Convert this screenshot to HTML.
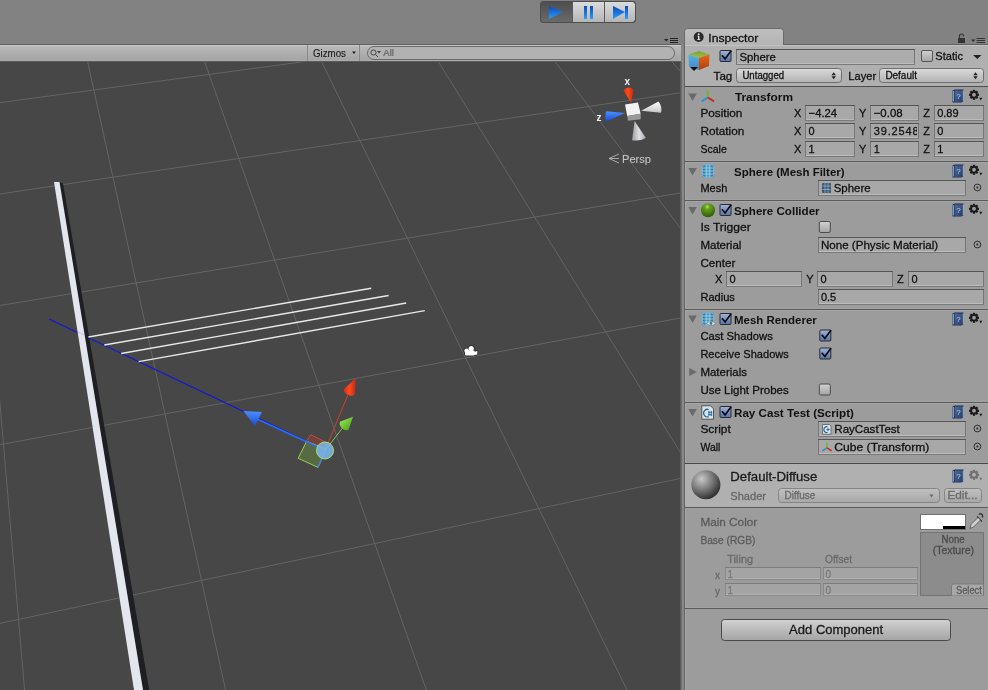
<!DOCTYPE html>
<html><head><meta charset="utf-8"><style>
html,body{margin:0;padding:0;width:988px;height:690px;overflow:hidden;background:#828282}
svg{display:block;font-family:"Liberation Sans",sans-serif;will-change:transform}
</style></head><body>
<svg width="988" height="690" viewBox="0 0 988 690">
<rect x="0" y="0" width="988" height="690" fill="#828282"/>
<defs>
<linearGradient id="tb" x1="0" y1="0" x2="0" y2="1"><stop offset="0" stop-color="#bcbcbc"/><stop offset="1" stop-color="#a2a2a2"/></linearGradient>
<linearGradient id="btn" x1="0" y1="0" x2="0" y2="1"><stop offset="0" stop-color="#dcdcdc"/><stop offset="1" stop-color="#b4b4b4"/></linearGradient>
<linearGradient id="btnd" x1="0" y1="0" x2="0" y2="1"><stop offset="0" stop-color="#4e4e4e"/><stop offset="1" stop-color="#6a6a6a"/></linearGradient>
<linearGradient id="tab" x1="0" y1="0" x2="0" y2="1"><stop offset="0" stop-color="#bfbfbf"/><stop offset="1" stop-color="#b4b4b4"/></linearGradient>
<linearGradient id="dd" x1="0" y1="0" x2="0" y2="1"><stop offset="0" stop-color="#dadada"/><stop offset="1" stop-color="#b2b2b2"/></linearGradient><linearGradient id="ac" x1="0" y1="0" x2="0" y2="1"><stop offset="0" stop-color="#d2d2d2"/><stop offset="1" stop-color="#a4a4a4"/></linearGradient>
<linearGradient id="blu" x1="0" y1="0" x2="0" y2="1"><stop offset="0" stop-color="#0a4ab8"/><stop offset="1" stop-color="#2a9cff"/></linearGradient>
<linearGradient id="cb" x1="0" y1="0" x2="0" y2="1"><stop offset="0" stop-color="#a2b4d6"/><stop offset="1" stop-color="#5474aa"/></linearGradient>
<linearGradient id="cbo" x1="0" y1="0" x2="0" y2="1"><stop offset="0" stop-color="#d2d2d2"/><stop offset="1" stop-color="#a4a4a4"/></linearGradient>
<radialGradient id="sph" cx="0.35" cy="0.3" r="0.75"><stop offset="0" stop-color="#c8c8c8"/><stop offset="0.6" stop-color="#6a6a6a"/><stop offset="1" stop-color="#2a2a2a"/></radialGradient>
<radialGradient id="gsph" cx="0.45" cy="0.25" r="0.75"><stop offset="0" stop-color="#b8e080"/><stop offset="0.22" stop-color="#68a41c"/><stop offset="1" stop-color="#2e5a04"/></radialGradient>
<linearGradient id="book" x1="0" y1="0" x2="1" y2="1"><stop offset="0" stop-color="#4e6c9c"/><stop offset="1" stop-color="#223e6c"/></linearGradient>
<linearGradient id="cr" x1="0" y1="0" x2="1" y2="0"><stop offset="0" stop-color="#d83010"/><stop offset="0.45" stop-color="#ff4a1e"/><stop offset="1" stop-color="#b82c10"/></linearGradient>
<linearGradient id="cbl" x1="0" y1="0" x2="0" y2="1"><stop offset="0" stop-color="#4a90ff"/><stop offset="1" stop-color="#1a4ad0"/></linearGradient>
<linearGradient id="cw" x1="0" y1="0" x2="0" y2="1"><stop offset="0" stop-color="#ffffff"/><stop offset="1" stop-color="#c4c4c4"/></linearGradient>
<linearGradient id="cg" x1="0" y1="0" x2="1" y2="0"><stop offset="0" stop-color="#9a9a9e"/><stop offset="0.5" stop-color="#e0e0e4"/><stop offset="1" stop-color="#a8a8ac"/></linearGradient>
<linearGradient id="cgr" x1="0" y1="0" x2="1" y2="1"><stop offset="0" stop-color="#a8f060"/><stop offset="1" stop-color="#3c9a10"/></linearGradient>
<linearGradient id="meshg" x1="0" y1="0" x2="1" y2="0"><stop offset="0" stop-color="#2a6a98"/><stop offset="0.5" stop-color="#4a9cc8"/><stop offset="1" stop-color="#2a6a98"/></linearGradient>
<linearGradient id="cubeB" x1="0" y1="0" x2="0" y2="1"><stop offset="0" stop-color="#5cb0e0"/><stop offset="1" stop-color="#3a8cc4"/></linearGradient>
<linearGradient id="cubeO" x1="0" y1="0" x2="0" y2="1"><stop offset="0" stop-color="#e2681e"/><stop offset="1" stop-color="#b83c0a"/></linearGradient>
<linearGradient id="cubeG" x1="0" y1="0" x2="0" y2="1"><stop offset="0" stop-color="#7aa432"/><stop offset="1" stop-color="#a0c048"/></linearGradient>
<linearGradient id="shd" x1="0" y1="0" x2="0" y2="1"><stop offset="0" stop-color="#c0c0c0"/><stop offset="1" stop-color="#a8a8a8"/></linearGradient>
<clipPath id="scene"><rect x="0" y="62" width="680" height="628"/></clipPath>
</defs>
<rect x="540.5" y="1.5" width="95" height="21" rx="3" fill="url(#btn)" stroke="#4c4c4c"/>
<path d="M543.5 2 h29 v20 h-29 a3 3 0 0 1 -3 -3 v-14 a3 3 0 0 1 3 -3z" fill="url(#btnd)"/>
<rect x="540.5" y="1.5" width="95" height="21" rx="3" fill="none" stroke="#4c4c4c"/>
<line x1="572.5" y1="2" x2="572.5" y2="22" stroke="#5a5a5a"/><line x1="604.5" y1="2" x2="604.5" y2="22" stroke="#5a5a5a"/>
<path d="M549 6 L563 12 L549 19 Z" fill="url(#blu)"/>
<rect x="584" y="6" width="3" height="13" fill="url(#blu)"/><rect x="590" y="6" width="3" height="13" fill="url(#blu)"/>
<path d="M613 6 L625 12 L613 19 Z" fill="url(#blu)"/><rect x="625" y="6" width="3" height="13" fill="url(#blu)"/>
<rect x="0" y="44" width="681" height="18" fill="url(#tb)"/>
<line x1="0" y1="44.5" x2="681" y2="44.5" stroke="#606060"/>
<line x1="0" y1="61.5" x2="681" y2="61.5" stroke="#5a5a5a"/><line x1="0" y1="45.5" x2="681" y2="45.5" stroke="#c8c8c8"/><line x1="0" y1="60.5" x2="681" y2="60.5" stroke="#acacac"/>
<line x1="307.5" y1="45" x2="307.5" y2="61" stroke="#8a8a8a"/><line x1="359.5" y1="45" x2="359.5" y2="61" stroke="#8a8a8a"/>
<text x="313" y="57" font-size="10" fill="#1a1a1a" stroke="#1a1a1a" stroke-width="0.12" textLength="33" lengthAdjust="spacingAndGlyphs">Gizmos</text>
<path d="M352 51.5 L356 51.5 L354 54 Z" fill="#222"/>
<rect x="367.5" y="46.5" width="307" height="13" rx="6.5" fill="#b2b2b2" stroke="#6a6a6a"/>
<circle cx="373.5" cy="52.5" r="2.6" fill="none" stroke="#444" stroke-width="1"/><line x1="375.4" y1="54.4" x2="378" y2="57" stroke="#444"/>
<path d="M377 51 L381 51 L379 53.5 Z" fill="#444"/>
<text x="383.3" y="55.6" font-size="8.5" fill="#5e5e5e" stroke="#5e5e5e" stroke-width="0.15" textLength="10.6" lengthAdjust="spacingAndGlyphs">All</text>
<path d="M664 39 L668.5 39 L666.2 41.5 Z" fill="#222"/>
<line x1="670" y1="38.5" x2="678" y2="38.5" stroke="#222"/>
<line x1="670" y1="40.5" x2="678" y2="40.5" stroke="#222"/>
<line x1="670" y1="42.5" x2="678" y2="42.5" stroke="#222"/>
<g clip-path="url(#scene)">
<rect x="0" y="62" width="680" height="628" fill="#474747"/>
<path d="M-450.52 -45.83L-2053.77 3526.95M-343.91 -57.08L-1364.95 3185.39M-240.45 -68.00L-776.98 2893.83M-139.99 -78.60L-269.23 2642.06M-42.42 -88.89L173.66 2422.45M52.39 -98.90L563.38 2229.20M144.56 -108.63L908.97 2057.84M234.20 -118.09L1217.50 1904.84M321.41 -127.29L1494.66 1767.41M406.28 -136.25L1744.97 1643.29M488.92 -144.97L1972.18 1530.63M569.39 -153.46L2179.33 1427.91M647.80 -161.73L2368.97 1333.87M724.22 -169.80L2543.22 1247.47M798.72 -177.66L2703.90 1167.79M871.38 -185.33L2852.52 1094.10M-673.77 -22.27L1078.94 -207.23M-721.31 44.06L1152.79 -169.27M-777.53 122.49L1236.47 -126.25M-845.02 216.67L1332.07 -77.10M-927.58 331.85L1442.35 -20.41M-1030.87 475.96L1570.96 45.71M-1163.82 661.46L1722.89 123.81M-1341.36 909.16L1905.11 217.49M-1590.43 1256.66L2127.68 331.91M-1965.15 1779.49L2405.68 474.82M-2592.73 2655.08L2762.76 658.39M-3859.34 4422.27L3238.24 902.83" stroke="#646464" stroke-width="1" fill="none"/>
<line x1="49" y1="319" x2="310" y2="443" stroke="#1414e0" stroke-width="1.2"/>
<path d="M59 182 L63 183.5 L149.2 690 L143 690 Z" fill="#1e1f22"/>
<path d="M54 182 L59.5 182 L143 690 L134 690 Z" fill="#e4e6ee"/>
<line x1="78" y1="332" x2="84" y2="334.9" stroke="#c8c8f0" stroke-width="1.2"/>
<line x1="88.4" y1="337" x2="371.2" y2="288.3" stroke="#e8e8e8" stroke-width="1.4"/>
<line x1="104.3" y1="345" x2="388.6" y2="295.5" stroke="#e8e8e8" stroke-width="1.4"/>
<line x1="121.2" y1="353.5" x2="406.2" y2="303" stroke="#e8e8e8" stroke-width="1.4"/>
<line x1="138.6" y1="361.6" x2="424.8" y2="310.6" stroke="#e8e8e8" stroke-width="1.4"/>
<g fill="#2a2a2a" stroke="#2a2a2a" stroke-width="1.4"><circle cx="466.6" cy="350.8" r="2.3"/><circle cx="471.2" cy="348.6" r="2.6"/><rect x="465" y="350.5" width="9.8" height="5" rx="1.2"/><path d="M474 352.2 L477.3 350.8 V354.8 L474 354.8 Z"/></g><g fill="#ffffff"><circle cx="466.6" cy="350.8" r="2.3"/><circle cx="471.2" cy="348.6" r="2.6"/><rect x="465" y="350.5" width="9.8" height="5" rx="1.2"/><path d="M474 352.2 L477.3 350.8 V354.8 L474 354.8 Z"/></g>
<path d="M311 434.7 L330 444.6 L325.5 449.9 L306.5 440.8 Z" fill="#a04030" fill-opacity="0.45" stroke="#d04a30" stroke-width="1"/>
<path d="M306.5 441.5 L326.3 449 L318 467.4 L298.2 458.3 Z" fill="#70a040" fill-opacity="0.4" stroke="#90d050" stroke-width="1"/>
<line x1="257" y1="419" x2="318" y2="447" stroke="#2a6cff" stroke-width="1.6"/>
<line x1="326" y1="448" x2="349.5" y2="391" stroke="#e04020" stroke-width="0.9"/>
<line x1="327" y1="448" x2="344.5" y2="425.5" stroke="#80d040" stroke-width="0.9"/>
<line x1="326" y1="450" x2="318" y2="467" stroke="#3a7cff" stroke-width="1.2"/>
<circle cx="325" cy="450.5" r="8.5" fill="#7ab4e8" fill-opacity="0.9" stroke="#a8e070" stroke-width="1"/>
<path d="M356.00 378.00 L354.81 394.30 A6 3.4 25.7 0 1 343.99 389.10 Z" fill="url(#cr)"/>
<path d="M353.00 416.70 L348.67 429.53 A5.8 3.8 44.0 0 1 340.33 421.47 Z" fill="url(#cgr)"/>
<path d="M243.4 411 L262 412 Q258 420 255 426 Z" fill="url(#cbl)"/>
<path d="M623.3 90.2 Q628.5 85 633.7 89.8 L631.1 102.8 Z" fill="url(#cr)"/>
<path d="M606 111.3 L625.2 113 L606 121.7 Q604.5 116 606 111.3 Z" fill="url(#cbl)"/>
<path d="M658.5 101.5 Q662.5 106.5 661 112.8 L641.1 110.7 Z" fill="url(#cw)"/>
<path d="M632 140.2 Q639.5 141.5 645.9 138 L634.6 121.1 Z" fill="url(#cg)"/>
<path d="M625 104.6 L638 102.4 L640.7 113.7 L627.2 115.9 Z" fill="#f2f2f2"/>
<path d="M627.2 115.9 L640.7 113.7 L640.7 119.3 L628 120.7 Z" fill="#9a9a9a"/>
<text x="624.5" y="85" font-size="10" font-weight="bold" fill="#f0f0f0">x</text>
<text x="596.5" y="121" font-size="10" font-weight="bold" fill="#f0f0f0">z</text>
<path d="M619 154 L609 158.5 L619 163 M609 158.5 L619 158.5" stroke="#c0c0c0" fill="none" stroke-width="0.8"/>
<text x="622" y="163" font-size="11" fill="#c4c4c4" stroke="#c4c4c4" stroke-width="0.08" textLength="29" lengthAdjust="spacingAndGlyphs">Persp</text>
</g>
<rect x="681" y="44" width="4" height="646" fill="#888888"/>
<line x1="680.5" y1="62" x2="680.5" y2="690" stroke="#5e5e5e"/>
<line x1="681.5" y1="62" x2="681.5" y2="690" stroke="#6c6c6c"/>
<line x1="684.5" y1="44" x2="684.5" y2="690" stroke="#646464"/>
<rect x="685" y="45" width="303" height="645" fill="#9c9c9c"/>
<line x1="685.5" y1="46" x2="685.5" y2="690" stroke="#a6a6a6"/>
<path d="M684.5 45 V31.5 a3 3 0 0 1 3 -3 H780.5 a3 3 0 0 1 3 3 V45" fill="url(#tab)" stroke="#6a6a6a"/>
<circle cx="698.7" cy="37" r="5" fill="#2a2a2a"/>
<circle cx="698.7" cy="34.2" r="0.9" fill="#e8e8e8"/><path d="M697.3 35.8 H699.4 V39.3 H700.3 V40 H697.2 V39.3 H698.1 V36.5 H697.3 Z" fill="#e8e8e8"/>
<text x="708.3" y="42" font-size="11" fill="#111" stroke="#111" stroke-width="0.28" textLength="50" lengthAdjust="spacingAndGlyphs">Inspector</text>
<rect x="958" y="38" width="7" height="5" fill="#333"/><path d="M959.5 38 v-2 a2 2 0 0 1 4 0 v0.5" stroke="#333" stroke-width="1.2" fill="none"/>
<path d="M971 39.5 L975.5 39.5 L973.25 42 Z" fill="#333"/>
<line x1="976.5" y1="38.5" x2="985" y2="38.5" stroke="#333"/>
<line x1="976.5" y1="40.5" x2="985" y2="40.5" stroke="#333"/>
<line x1="976.5" y1="42.5" x2="985" y2="42.5" stroke="#333"/>
<rect x="685" y="45" width="303" height="41" fill="#b0b0b0"/>
<line x1="784" y1="44.5" x2="988" y2="44.5" stroke="#626262"/><line x1="685" y1="45.5" x2="988" y2="45.5" stroke="#c2c2c2"/>
<path d="M688.5 54.5 L699 51 L709.5 54.5 L699 58 Z" fill="url(#cubeG)"/>
<path d="M688.5 54.5 L699 58 L699 70 L689 66.5 Z" fill="url(#cubeB)"/>
<path d="M699 58 L709.5 54.5 L709 66 L699 70 Z" fill="url(#cubeO)"/>
<path d="M690 67 L698 67 L694 71 Z" fill="#111"/>
<rect x="720.0" y="50.5" width="11" height="11" rx="1" fill="url(#cb)" stroke="#2a2a30"/>
<path d="M721.9 55.3 L725.1 58.9 L731.3 50.4" stroke="#0a0a10" stroke-width="1.7" fill="none"/>
<rect x="736" y="49" width="179" height="16" fill="#acacac"/>
<line x1="736.5" y1="49" x2="736.5" y2="65" stroke="#767676"/><line x1="914.5" y1="49" x2="914.5" y2="65" stroke="#767676"/>
<line x1="736" y1="49.5" x2="915" y2="49.5" stroke="#555555"/>
<line x1="736" y1="64.5" x2="915" y2="64.5" stroke="#7a7a7a"/>
<line x1="737" y1="63.5" x2="914" y2="63.5" stroke="#bcbcbc"/>
<text x="739.4" y="61" font-size="11" fill="#111" stroke="#111" stroke-width="0.28" textLength="36.4" lengthAdjust="spacingAndGlyphs">Sphere</text>
<rect x="921.5" y="50.5" width="11" height="11" rx="1.5" fill="url(#cbo)" stroke="#555"/>
<text x="935.3" y="60" font-size="11" fill="#111" stroke="#111" stroke-width="0.28" textLength="27.7" lengthAdjust="spacingAndGlyphs">Static</text>
<path d="M973 55 L981.5 55 L977.25 59 Z" fill="#222"/>
<text x="713.6" y="80" font-size="11" fill="#111" stroke="#111" stroke-width="0.28" textLength="18.7" lengthAdjust="spacingAndGlyphs">Tag</text>
<rect x="736.5" y="68.5" width="105" height="14" rx="3" fill="url(#dd)" stroke="#707070"/>
<text x="742.4" y="79" font-size="10" fill="#111" stroke="#111" stroke-width="0.28" textLength="41.8" lengthAdjust="spacingAndGlyphs">Untagged</text>
<path d="M831.5 75.3 L833.7 72.3 L835.9 75.3 Z M831.5 76.3 L833.7 79.3 L835.9 76.3 Z" fill="#222"/>
<text x="848.3" y="79.5" font-size="11" fill="#111" stroke="#111" stroke-width="0.28" textLength="27.8" lengthAdjust="spacingAndGlyphs">Layer</text>
<rect x="879.5" y="68.5" width="104" height="14" rx="3" fill="url(#dd)" stroke="#707070"/>
<text x="885.4" y="79" font-size="10" fill="#111" stroke="#111" stroke-width="0.28" textLength="31.5" lengthAdjust="spacingAndGlyphs">Default</text>
<path d="M973.3 75.3 L975.5 72.3 L977.7 75.3 Z M973.3 76.3 L975.5 79.3 L977.7 76.3 Z" fill="#222"/>
<line x1="685" y1="86.5" x2="988" y2="86.5" stroke="#4e4e4e"/>
<path d="M688.3 93.4 L696.8 93.4 L692.55 100.9 Z" fill="#6a6a6a"/>
<line x1="707.8" y1="97.5" x2="707.8" y2="90.3" stroke="#6ab82a" stroke-width="2"/>
<line x1="707.8" y1="97.5" x2="714.0" y2="101.3" stroke="#d02818" stroke-width="2"/>
<line x1="707.8" y1="97.5" x2="701.5999999999999" y2="101.3" stroke="#2a90d0" stroke-width="2"/>
<text x="734.9" y="101" font-size="11" font-weight="bold" fill="#111" textLength="58.1" lengthAdjust="spacingAndGlyphs">Transform</text>
<path d="M952.5 90.5 L955 89.5 H963.5 V101.5 L961 102.5 H952.5 Z" fill="#1a2c4c"/>
<rect x="954.5" y="90.5" width="8.5" height="11.5" fill="url(#book)"/>
<line x1="953.3" y1="91" x2="953.3" y2="101.5" stroke="#98b4dc" stroke-width="1"/>
<line x1="963.3" y1="90.5" x2="963.3" y2="101.5" stroke="#c8d4e4" stroke-width="0.7"/>
<text x="956.3" y="99.2" font-size="8" fill="#c8d4e4">?</text>
<circle cx="974" cy="94.8" r="2.9" fill="none" stroke="#1a1a1a" stroke-width="1.9"/>
<rect x="972.9" y="89.8" width="2.2" height="2.6" fill="#1a1a1a" transform="rotate(0 974 94.8)"/>
<rect x="972.9" y="89.8" width="2.2" height="2.6" fill="#1a1a1a" transform="rotate(45 974 94.8)"/>
<rect x="972.9" y="89.8" width="2.2" height="2.6" fill="#1a1a1a" transform="rotate(90 974 94.8)"/>
<rect x="972.9" y="89.8" width="2.2" height="2.6" fill="#1a1a1a" transform="rotate(135 974 94.8)"/>
<rect x="972.9" y="89.8" width="2.2" height="2.6" fill="#1a1a1a" transform="rotate(180 974 94.8)"/>
<rect x="972.9" y="89.8" width="2.2" height="2.6" fill="#1a1a1a" transform="rotate(225 974 94.8)"/>
<rect x="972.9" y="89.8" width="2.2" height="2.6" fill="#1a1a1a" transform="rotate(270 974 94.8)"/>
<rect x="972.9" y="89.8" width="2.2" height="2.6" fill="#1a1a1a" transform="rotate(315 974 94.8)"/>
<path d="M979.3 97.8 L982.3 97.8 L980.8 100.6 Z" fill="#1a1a1a"/>
<text x="700.4" y="116.8" font-size="11" fill="#111" stroke="#111" stroke-width="0.28" textLength="42" lengthAdjust="spacingAndGlyphs">Position</text>
<text x="794" y="116.8" font-size="11" fill="#111" stroke="#111" stroke-width="0.28">X</text>
<rect x="805" y="105" width="50" height="16" fill="#a8a8a8"/>
<line x1="805.5" y1="105" x2="805.5" y2="121" stroke="#767676"/><line x1="854.5" y1="105" x2="854.5" y2="121" stroke="#767676"/>
<line x1="805" y1="105.5" x2="855" y2="105.5" stroke="#555555"/>
<line x1="805" y1="120.5" x2="855" y2="120.5" stroke="#7a7a7a"/>
<line x1="806" y1="119.5" x2="854" y2="119.5" stroke="#bcbcbc"/>
<text x="859" y="116.8" font-size="11" fill="#111" stroke="#111" stroke-width="0.28">Y</text>
<rect x="870" y="105" width="49" height="16" fill="#a8a8a8"/>
<line x1="870.5" y1="105" x2="870.5" y2="121" stroke="#767676"/><line x1="918.5" y1="105" x2="918.5" y2="121" stroke="#767676"/>
<line x1="870" y1="105.5" x2="919" y2="105.5" stroke="#555555"/>
<line x1="870" y1="120.5" x2="919" y2="120.5" stroke="#7a7a7a"/>
<line x1="871" y1="119.5" x2="918" y2="119.5" stroke="#bcbcbc"/>
<text x="923.2" y="116.8" font-size="11" fill="#111" stroke="#111" stroke-width="0.28">Z</text>
<rect x="934" y="105" width="50" height="16" fill="#a8a8a8"/>
<line x1="934.5" y1="105" x2="934.5" y2="121" stroke="#767676"/><line x1="983.5" y1="105" x2="983.5" y2="121" stroke="#767676"/>
<line x1="934" y1="105.5" x2="984" y2="105.5" stroke="#555555"/>
<line x1="934" y1="120.5" x2="984" y2="120.5" stroke="#7a7a7a"/>
<line x1="935" y1="119.5" x2="983" y2="119.5" stroke="#bcbcbc"/>
<text x="808.6" y="116.8" font-size="11" fill="#111" stroke="#111" stroke-width="0.28" textLength="28.5" lengthAdjust="spacingAndGlyphs">−4.24</text>
<text x="873.7" y="116.8" font-size="11" fill="#111" stroke="#111" stroke-width="0.28" textLength="28.9" lengthAdjust="spacingAndGlyphs">−0.08</text>
<text x="937.2" y="116.8" font-size="11" fill="#111" stroke="#111" stroke-width="0.28">0.89</text>
<text x="700.4" y="134.8" font-size="11" fill="#111" stroke="#111" stroke-width="0.28" textLength="44" lengthAdjust="spacingAndGlyphs">Rotation</text>
<text x="794" y="134.8" font-size="11" fill="#111" stroke="#111" stroke-width="0.28">X</text>
<rect x="805" y="123" width="50" height="16" fill="#a8a8a8"/>
<line x1="805.5" y1="123" x2="805.5" y2="139" stroke="#767676"/><line x1="854.5" y1="123" x2="854.5" y2="139" stroke="#767676"/>
<line x1="805" y1="123.5" x2="855" y2="123.5" stroke="#555555"/>
<line x1="805" y1="138.5" x2="855" y2="138.5" stroke="#7a7a7a"/>
<line x1="806" y1="137.5" x2="854" y2="137.5" stroke="#bcbcbc"/>
<text x="859" y="134.8" font-size="11" fill="#111" stroke="#111" stroke-width="0.28">Y</text>
<rect x="870" y="123" width="49" height="16" fill="#a8a8a8"/>
<line x1="870.5" y1="123" x2="870.5" y2="139" stroke="#767676"/><line x1="918.5" y1="123" x2="918.5" y2="139" stroke="#767676"/>
<line x1="870" y1="123.5" x2="919" y2="123.5" stroke="#555555"/>
<line x1="870" y1="138.5" x2="919" y2="138.5" stroke="#7a7a7a"/>
<line x1="871" y1="137.5" x2="918" y2="137.5" stroke="#bcbcbc"/>
<text x="923.2" y="134.8" font-size="11" fill="#111" stroke="#111" stroke-width="0.28">Z</text>
<rect x="934" y="123" width="50" height="16" fill="#a8a8a8"/>
<line x1="934.5" y1="123" x2="934.5" y2="139" stroke="#767676"/><line x1="983.5" y1="123" x2="983.5" y2="139" stroke="#767676"/>
<line x1="934" y1="123.5" x2="984" y2="123.5" stroke="#555555"/>
<line x1="934" y1="138.5" x2="984" y2="138.5" stroke="#7a7a7a"/>
<line x1="935" y1="137.5" x2="983" y2="137.5" stroke="#bcbcbc"/>
<text x="808.6" y="134.8" font-size="11" fill="#111" stroke="#111" stroke-width="0.28">0</text>
<svg x="870" y="123" width="46.5" height="16" overflow="hidden"><text x="3.7" y="11.800000000000011" font-size="11" fill="#111" stroke="#111" stroke-width="0.28" textLength="45" lengthAdjust="spacing">39.2548</text></svg>
<text x="937.2" y="134.8" font-size="11" fill="#111" stroke="#111" stroke-width="0.28">0</text>
<text x="700.4" y="152.8" font-size="11" fill="#111" stroke="#111" stroke-width="0.28" textLength="26.4" lengthAdjust="spacingAndGlyphs">Scale</text>
<text x="794" y="152.8" font-size="11" fill="#111" stroke="#111" stroke-width="0.28">X</text>
<rect x="805" y="141" width="50" height="16" fill="#a8a8a8"/>
<line x1="805.5" y1="141" x2="805.5" y2="157" stroke="#767676"/><line x1="854.5" y1="141" x2="854.5" y2="157" stroke="#767676"/>
<line x1="805" y1="141.5" x2="855" y2="141.5" stroke="#555555"/>
<line x1="805" y1="156.5" x2="855" y2="156.5" stroke="#7a7a7a"/>
<line x1="806" y1="155.5" x2="854" y2="155.5" stroke="#bcbcbc"/>
<text x="859" y="152.8" font-size="11" fill="#111" stroke="#111" stroke-width="0.28">Y</text>
<rect x="870" y="141" width="49" height="16" fill="#a8a8a8"/>
<line x1="870.5" y1="141" x2="870.5" y2="157" stroke="#767676"/><line x1="918.5" y1="141" x2="918.5" y2="157" stroke="#767676"/>
<line x1="870" y1="141.5" x2="919" y2="141.5" stroke="#555555"/>
<line x1="870" y1="156.5" x2="919" y2="156.5" stroke="#7a7a7a"/>
<line x1="871" y1="155.5" x2="918" y2="155.5" stroke="#bcbcbc"/>
<text x="923.2" y="152.8" font-size="11" fill="#111" stroke="#111" stroke-width="0.28">Z</text>
<rect x="934" y="141" width="50" height="16" fill="#a8a8a8"/>
<line x1="934.5" y1="141" x2="934.5" y2="157" stroke="#767676"/><line x1="983.5" y1="141" x2="983.5" y2="157" stroke="#767676"/>
<line x1="934" y1="141.5" x2="984" y2="141.5" stroke="#555555"/>
<line x1="934" y1="156.5" x2="984" y2="156.5" stroke="#7a7a7a"/>
<line x1="935" y1="155.5" x2="983" y2="155.5" stroke="#bcbcbc"/>
<text x="808.6" y="152.8" font-size="11" fill="#111" stroke="#111" stroke-width="0.28">1</text>
<text x="873.7" y="152.8" font-size="11" fill="#111" stroke="#111" stroke-width="0.28">1</text>
<text x="937.2" y="152.8" font-size="11" fill="#111" stroke="#111" stroke-width="0.28">1</text>
<line x1="685" y1="160.5" x2="988" y2="160.5" stroke="#a2a2a2"/>
<line x1="685" y1="161.5" x2="988" y2="161.5" stroke="#5a5a5a"/>
<line x1="685" y1="162.5" x2="988" y2="162.5" stroke="#a6a6a6"/>
<path d="M688.3 168 L696.8 168 L692.55 175.5 Z" fill="#6a6a6a"/>
<rect x="702" y="164.5" width="12" height="13" rx="2.5" fill="url(#meshg)"/>
<path d="M706.2 165.0 V177.0 M709.8 165.0 V177.0 M702.5 168.0 H713.5 M702.5 171.0 H713.5 M702.5 174.0 H713.5" stroke="#a8dcee" stroke-width="0.8"/>
<rect x="702.4" y="164.9" width="11.2" height="12.2" rx="2.3" fill="none" stroke="#8ccbe4" stroke-width="0.8"/>
<text x="734.1" y="175.5" font-size="11" font-weight="bold" fill="#111" textLength="110.5" lengthAdjust="spacingAndGlyphs">Sphere (Mesh Filter)</text>
<path d="M952.5 165.5 L955 164.5 H963.5 V176.5 L961 177.5 H952.5 Z" fill="#1a2c4c"/>
<rect x="954.5" y="165.5" width="8.5" height="11.5" fill="url(#book)"/>
<line x1="953.3" y1="166" x2="953.3" y2="176.5" stroke="#98b4dc" stroke-width="1"/>
<line x1="963.3" y1="165.5" x2="963.3" y2="176.5" stroke="#c8d4e4" stroke-width="0.7"/>
<text x="956.3" y="174.2" font-size="8" fill="#c8d4e4">?</text>
<circle cx="974" cy="169.8" r="2.9" fill="none" stroke="#1a1a1a" stroke-width="1.9"/>
<rect x="972.9" y="164.8" width="2.2" height="2.6" fill="#1a1a1a" transform="rotate(0 974 169.8)"/>
<rect x="972.9" y="164.8" width="2.2" height="2.6" fill="#1a1a1a" transform="rotate(45 974 169.8)"/>
<rect x="972.9" y="164.8" width="2.2" height="2.6" fill="#1a1a1a" transform="rotate(90 974 169.8)"/>
<rect x="972.9" y="164.8" width="2.2" height="2.6" fill="#1a1a1a" transform="rotate(135 974 169.8)"/>
<rect x="972.9" y="164.8" width="2.2" height="2.6" fill="#1a1a1a" transform="rotate(180 974 169.8)"/>
<rect x="972.9" y="164.8" width="2.2" height="2.6" fill="#1a1a1a" transform="rotate(225 974 169.8)"/>
<rect x="972.9" y="164.8" width="2.2" height="2.6" fill="#1a1a1a" transform="rotate(270 974 169.8)"/>
<rect x="972.9" y="164.8" width="2.2" height="2.6" fill="#1a1a1a" transform="rotate(315 974 169.8)"/>
<path d="M979.3 172.8 L982.3 172.8 L980.8 175.6 Z" fill="#1a1a1a"/>
<text x="700.4" y="191.5" font-size="11" fill="#111" stroke="#111" stroke-width="0.28" textLength="26.9" lengthAdjust="spacingAndGlyphs">Mesh</text>
<rect x="818" y="180" width="148" height="16" fill="#a8a8a8"/>
<line x1="818.5" y1="180" x2="818.5" y2="196" stroke="#767676"/><line x1="965.5" y1="180" x2="965.5" y2="196" stroke="#767676"/>
<line x1="818" y1="180.5" x2="966" y2="180.5" stroke="#555555"/>
<line x1="818" y1="195.5" x2="966" y2="195.5" stroke="#7a7a7a"/>
<line x1="819" y1="194.5" x2="965" y2="194.5" stroke="#bcbcbc"/>
<rect x="822" y="183" width="9" height="10" rx="1" fill="#3a5a78"/><path d="M822.5 186 H830.5 M822.5 189.5 H830.5 M825 183 V193 M828 183 V193" stroke="#9ab" stroke-width="0.8"/>
<text x="833.7" y="191.5" font-size="11" fill="#111" stroke="#111" stroke-width="0.28" textLength="37" lengthAdjust="spacingAndGlyphs">Sphere</text>
<circle cx="977.4" cy="187.5" r="3.4" fill="none" stroke="#222" stroke-width="0.9"/><circle cx="977.4" cy="187.5" r="1" fill="#222"/>
<line x1="685" y1="199.5" x2="988" y2="199.5" stroke="#a2a2a2"/>
<line x1="685" y1="200.5" x2="988" y2="200.5" stroke="#5a5a5a"/>
<line x1="685" y1="201.5" x2="988" y2="201.5" stroke="#a6a6a6"/>
<path d="M688.3 207 L696.8 207 L692.55 214.5 Z" fill="#6a6a6a"/>
<circle cx="708" cy="210.3" r="7" fill="url(#gsph)"/>
<rect x="720.0" y="204.5" width="11" height="11" rx="1" fill="url(#cb)" stroke="#2a2a30"/>
<path d="M721.9 209.3 L725.1 212.9 L731.3 204.4" stroke="#0a0a10" stroke-width="1.7" fill="none"/>
<text x="734" y="214.8" font-size="11" font-weight="bold" fill="#111" textLength="85.6" lengthAdjust="spacingAndGlyphs">Sphere Collider</text>
<path d="M952.5 204.5 L955 203.5 H963.5 V215.5 L961 216.5 H952.5 Z" fill="#1a2c4c"/>
<rect x="954.5" y="204.5" width="8.5" height="11.5" fill="url(#book)"/>
<line x1="953.3" y1="205" x2="953.3" y2="215.5" stroke="#98b4dc" stroke-width="1"/>
<line x1="963.3" y1="204.5" x2="963.3" y2="215.5" stroke="#c8d4e4" stroke-width="0.7"/>
<text x="956.3" y="213.2" font-size="8" fill="#c8d4e4">?</text>
<circle cx="974" cy="208.8" r="2.9" fill="none" stroke="#1a1a1a" stroke-width="1.9"/>
<rect x="972.9" y="203.8" width="2.2" height="2.6" fill="#1a1a1a" transform="rotate(0 974 208.8)"/>
<rect x="972.9" y="203.8" width="2.2" height="2.6" fill="#1a1a1a" transform="rotate(45 974 208.8)"/>
<rect x="972.9" y="203.8" width="2.2" height="2.6" fill="#1a1a1a" transform="rotate(90 974 208.8)"/>
<rect x="972.9" y="203.8" width="2.2" height="2.6" fill="#1a1a1a" transform="rotate(135 974 208.8)"/>
<rect x="972.9" y="203.8" width="2.2" height="2.6" fill="#1a1a1a" transform="rotate(180 974 208.8)"/>
<rect x="972.9" y="203.8" width="2.2" height="2.6" fill="#1a1a1a" transform="rotate(225 974 208.8)"/>
<rect x="972.9" y="203.8" width="2.2" height="2.6" fill="#1a1a1a" transform="rotate(270 974 208.8)"/>
<rect x="972.9" y="203.8" width="2.2" height="2.6" fill="#1a1a1a" transform="rotate(315 974 208.8)"/>
<path d="M979.3 211.8 L982.3 211.8 L980.8 214.6 Z" fill="#1a1a1a"/>
<text x="700.4" y="231" font-size="11" fill="#111" stroke="#111" stroke-width="0.28" textLength="50.4" lengthAdjust="spacingAndGlyphs">Is Trigger</text>
<rect x="819.3" y="221.5" width="11" height="11" rx="1.5" fill="url(#cbo)" stroke="#4a4a4a"/>
<text x="700.4" y="248.5" font-size="11" fill="#111" stroke="#111" stroke-width="0.28" textLength="41" lengthAdjust="spacingAndGlyphs">Material</text>
<rect x="818" y="237" width="148" height="16" fill="#a8a8a8"/>
<line x1="818.5" y1="237" x2="818.5" y2="253" stroke="#767676"/><line x1="965.5" y1="237" x2="965.5" y2="253" stroke="#767676"/>
<line x1="818" y1="237.5" x2="966" y2="237.5" stroke="#555555"/>
<line x1="818" y1="252.5" x2="966" y2="252.5" stroke="#7a7a7a"/>
<line x1="819" y1="251.5" x2="965" y2="251.5" stroke="#bcbcbc"/>
<text x="820.9" y="248.5" font-size="11" fill="#111" stroke="#111" stroke-width="0.28" textLength="117.2" lengthAdjust="spacingAndGlyphs">None (Physic Material)</text>
<circle cx="977.4" cy="244.5" r="3.4" fill="none" stroke="#222" stroke-width="0.9"/><circle cx="977.4" cy="244.5" r="1" fill="#222"/>
<text x="700.4" y="266.5" font-size="11" fill="#111" stroke="#111" stroke-width="0.28" textLength="34.9" lengthAdjust="spacingAndGlyphs">Center</text>
<text x="715.1" y="282.5" font-size="11" fill="#111" stroke="#111" stroke-width="0.28">X</text>
<rect x="726" y="271" width="76" height="16" fill="#a8a8a8"/>
<line x1="726.5" y1="271" x2="726.5" y2="287" stroke="#767676"/><line x1="801.5" y1="271" x2="801.5" y2="287" stroke="#767676"/>
<line x1="726" y1="271.5" x2="802" y2="271.5" stroke="#555555"/>
<line x1="726" y1="286.5" x2="802" y2="286.5" stroke="#7a7a7a"/>
<line x1="727" y1="285.5" x2="801" y2="285.5" stroke="#bcbcbc"/>
<text x="729.5" y="282.5" font-size="11" fill="#111" stroke="#111" stroke-width="0.28">0</text>
<text x="806.2" y="282.5" font-size="11" fill="#111" stroke="#111" stroke-width="0.28">Y</text>
<rect x="817" y="271" width="76" height="16" fill="#a8a8a8"/>
<line x1="817.5" y1="271" x2="817.5" y2="287" stroke="#767676"/><line x1="892.5" y1="271" x2="892.5" y2="287" stroke="#767676"/>
<line x1="817" y1="271.5" x2="893" y2="271.5" stroke="#555555"/>
<line x1="817" y1="286.5" x2="893" y2="286.5" stroke="#7a7a7a"/>
<line x1="818" y1="285.5" x2="892" y2="285.5" stroke="#bcbcbc"/>
<text x="820.5" y="282.5" font-size="11" fill="#111" stroke="#111" stroke-width="0.28">0</text>
<text x="897.1" y="282.5" font-size="11" fill="#111" stroke="#111" stroke-width="0.28">Z</text>
<rect x="908" y="271" width="76" height="16" fill="#a8a8a8"/>
<line x1="908.5" y1="271" x2="908.5" y2="287" stroke="#767676"/><line x1="983.5" y1="271" x2="983.5" y2="287" stroke="#767676"/>
<line x1="908" y1="271.5" x2="984" y2="271.5" stroke="#555555"/>
<line x1="908" y1="286.5" x2="984" y2="286.5" stroke="#7a7a7a"/>
<line x1="909" y1="285.5" x2="983" y2="285.5" stroke="#bcbcbc"/>
<text x="911.5" y="282.5" font-size="11" fill="#111" stroke="#111" stroke-width="0.28">0</text>
<text x="700.4" y="300.8" font-size="11" fill="#111" stroke="#111" stroke-width="0.28" textLength="34.5" lengthAdjust="spacingAndGlyphs">Radius</text>
<rect x="818" y="289" width="166" height="16" fill="#a8a8a8"/>
<line x1="818.5" y1="289" x2="818.5" y2="305" stroke="#767676"/><line x1="983.5" y1="289" x2="983.5" y2="305" stroke="#767676"/>
<line x1="818" y1="289.5" x2="984" y2="289.5" stroke="#555555"/>
<line x1="818" y1="304.5" x2="984" y2="304.5" stroke="#7a7a7a"/>
<line x1="819" y1="303.5" x2="983" y2="303.5" stroke="#bcbcbc"/>
<text x="820.9" y="300.8" font-size="11" fill="#111" stroke="#111" stroke-width="0.28">0.5</text>
<line x1="685" y1="308.5" x2="988" y2="308.5" stroke="#a2a2a2"/>
<line x1="685" y1="309.5" x2="988" y2="309.5" stroke="#5a5a5a"/>
<line x1="685" y1="310.5" x2="988" y2="310.5" stroke="#a6a6a6"/>
<path d="M688.3 315.5 L696.8 315.5 L692.55 323.0 Z" fill="#6a6a6a"/>
<rect x="702" y="312.5" width="12" height="13" rx="2.5" fill="url(#meshg)"/>
<path d="M706.2 313.0 V325.0 M709.8 313.0 V325.0 M702.5 316.0 H713.5 M702.5 319.0 H713.5 M702.5 322.0 H713.5" stroke="#a8dcee" stroke-width="0.8"/>
<rect x="702.4" y="312.9" width="11.2" height="12.2" rx="2.3" fill="none" stroke="#8ccbe4" stroke-width="0.8"/>
<path d="M706.5 323.5 Q711 319.5 715.5 323.5 Q711 327.5 706.5 323.5 Z" fill="#e8ecee" stroke="#707070" stroke-width="0.6"/><circle cx="711" cy="323.5" r="1.4" fill="#3a7a90"/>
<rect x="720.0" y="313.5" width="11" height="11" rx="1" fill="url(#cb)" stroke="#2a2a30"/>
<path d="M721.9 318.3 L725.1 321.9 L731.3 313.4" stroke="#0a0a10" stroke-width="1.7" fill="none"/>
<text x="734" y="323.5" font-size="11" font-weight="bold" fill="#111" textLength="82.8" lengthAdjust="spacingAndGlyphs">Mesh Renderer</text>
<path d="M952.5 313.5 L955 312.5 H963.5 V324.5 L961 325.5 H952.5 Z" fill="#1a2c4c"/>
<rect x="954.5" y="313.5" width="8.5" height="11.5" fill="url(#book)"/>
<line x1="953.3" y1="314" x2="953.3" y2="324.5" stroke="#98b4dc" stroke-width="1"/>
<line x1="963.3" y1="313.5" x2="963.3" y2="324.5" stroke="#c8d4e4" stroke-width="0.7"/>
<text x="956.3" y="322.2" font-size="8" fill="#c8d4e4">?</text>
<circle cx="974" cy="317.8" r="2.9" fill="none" stroke="#1a1a1a" stroke-width="1.9"/>
<rect x="972.9" y="312.8" width="2.2" height="2.6" fill="#1a1a1a" transform="rotate(0 974 317.8)"/>
<rect x="972.9" y="312.8" width="2.2" height="2.6" fill="#1a1a1a" transform="rotate(45 974 317.8)"/>
<rect x="972.9" y="312.8" width="2.2" height="2.6" fill="#1a1a1a" transform="rotate(90 974 317.8)"/>
<rect x="972.9" y="312.8" width="2.2" height="2.6" fill="#1a1a1a" transform="rotate(135 974 317.8)"/>
<rect x="972.9" y="312.8" width="2.2" height="2.6" fill="#1a1a1a" transform="rotate(180 974 317.8)"/>
<rect x="972.9" y="312.8" width="2.2" height="2.6" fill="#1a1a1a" transform="rotate(225 974 317.8)"/>
<rect x="972.9" y="312.8" width="2.2" height="2.6" fill="#1a1a1a" transform="rotate(270 974 317.8)"/>
<rect x="972.9" y="312.8" width="2.2" height="2.6" fill="#1a1a1a" transform="rotate(315 974 317.8)"/>
<path d="M979.3 320.8 L982.3 320.8 L980.8 323.6 Z" fill="#1a1a1a"/>
<text x="700.4" y="339.7" font-size="11" fill="#111" stroke="#111" stroke-width="0.28" textLength="72.4" lengthAdjust="spacingAndGlyphs">Cast Shadows</text>
<rect x="819.8" y="330" width="11" height="11" rx="1" fill="url(#cb)" stroke="#2a2a30"/>
<path d="M821.6999999999999 334.8 L824.9 338.4 L831.0999999999999 329.9" stroke="#0a0a10" stroke-width="1.7" fill="none"/>
<text x="700.4" y="357.5" font-size="11" fill="#111" stroke="#111" stroke-width="0.28" textLength="88.4" lengthAdjust="spacingAndGlyphs">Receive Shadows</text>
<rect x="819.8" y="348" width="11" height="11" rx="1" fill="url(#cb)" stroke="#2a2a30"/>
<path d="M821.6999999999999 352.8 L824.9 356.4 L831.0999999999999 347.9" stroke="#0a0a10" stroke-width="1.7" fill="none"/>
<path d="M689.3 368 L696.8 372 L689.3 376 Z" fill="#6a6a6a"/>
<text x="700.4" y="375.7" font-size="11" fill="#111" stroke="#111" stroke-width="0.28" textLength="46.6" lengthAdjust="spacingAndGlyphs">Materials</text>
<text x="700.4" y="393.8" font-size="11" fill="#111" stroke="#111" stroke-width="0.28" textLength="88.4" lengthAdjust="spacingAndGlyphs">Use Light Probes</text>
<rect x="819.3" y="384" width="11" height="11" rx="1.5" fill="url(#cbo)" stroke="#4a4a4a"/>
<line x1="685" y1="401.5" x2="988" y2="401.5" stroke="#a2a2a2"/>
<line x1="685" y1="402.5" x2="988" y2="402.5" stroke="#5a5a5a"/>
<line x1="685" y1="403.5" x2="988" y2="403.5" stroke="#a6a6a6"/>
<path d="M688.3 409 L696.8 409 L692.55 416.5 Z" fill="#6a6a6a"/>
<path d="M701.8 405.8 H710.5 L713.5 408.8 V419.2 H701.8 Z" fill="#dde2e8" stroke="#4a4a4a" stroke-width="0.9"/>
<path d="M708.6 409.6 A3.6 3.8 0 1 0 708.6 416.6" stroke="#1a6aa0" stroke-width="1.3" fill="none"/>
<path d="M709 411 V416 M711.3 411 V416 M708 412.3 H712.3 M708 414.7 H712.3" stroke="#1a6aa0" stroke-width="0.9"/>
<rect x="720.0" y="406.5" width="11" height="11" rx="1" fill="url(#cb)" stroke="#2a2a30"/>
<path d="M721.9 411.3 L725.1 414.9 L731.3 406.4" stroke="#0a0a10" stroke-width="1.7" fill="none"/>
<text x="734" y="416.5" font-size="11" font-weight="bold" fill="#111" textLength="119.9" lengthAdjust="spacingAndGlyphs">Ray Cast Test (Script)</text>
<path d="M952.5 406.5 L955 405.5 H963.5 V417.5 L961 418.5 H952.5 Z" fill="#1a2c4c"/>
<rect x="954.5" y="406.5" width="8.5" height="11.5" fill="url(#book)"/>
<line x1="953.3" y1="407" x2="953.3" y2="417.5" stroke="#98b4dc" stroke-width="1"/>
<line x1="963.3" y1="406.5" x2="963.3" y2="417.5" stroke="#c8d4e4" stroke-width="0.7"/>
<text x="956.3" y="415.2" font-size="8" fill="#c8d4e4">?</text>
<circle cx="974" cy="410.8" r="2.9" fill="none" stroke="#1a1a1a" stroke-width="1.9"/>
<rect x="972.9" y="405.8" width="2.2" height="2.6" fill="#1a1a1a" transform="rotate(0 974 410.8)"/>
<rect x="972.9" y="405.8" width="2.2" height="2.6" fill="#1a1a1a" transform="rotate(45 974 410.8)"/>
<rect x="972.9" y="405.8" width="2.2" height="2.6" fill="#1a1a1a" transform="rotate(90 974 410.8)"/>
<rect x="972.9" y="405.8" width="2.2" height="2.6" fill="#1a1a1a" transform="rotate(135 974 410.8)"/>
<rect x="972.9" y="405.8" width="2.2" height="2.6" fill="#1a1a1a" transform="rotate(180 974 410.8)"/>
<rect x="972.9" y="405.8" width="2.2" height="2.6" fill="#1a1a1a" transform="rotate(225 974 410.8)"/>
<rect x="972.9" y="405.8" width="2.2" height="2.6" fill="#1a1a1a" transform="rotate(270 974 410.8)"/>
<rect x="972.9" y="405.8" width="2.2" height="2.6" fill="#1a1a1a" transform="rotate(315 974 410.8)"/>
<path d="M979.3 413.8 L982.3 413.8 L980.8 416.6 Z" fill="#1a1a1a"/>
<text x="700.4" y="433" font-size="11" fill="#111" stroke="#111" stroke-width="0.28" textLength="30.4" lengthAdjust="spacingAndGlyphs">Script</text>
<rect x="818" y="421" width="148" height="16" fill="#a8a8a8"/>
<line x1="818.5" y1="421" x2="818.5" y2="437" stroke="#767676"/><line x1="965.5" y1="421" x2="965.5" y2="437" stroke="#767676"/>
<line x1="818" y1="421.5" x2="966" y2="421.5" stroke="#555555"/>
<line x1="818" y1="436.5" x2="966" y2="436.5" stroke="#7a7a7a"/>
<line x1="819" y1="435.5" x2="965" y2="435.5" stroke="#bcbcbc"/>
<path d="M822.5 424.5 H829.3 L831 426.2 V434.3 H822.5 Z" fill="#dde2e8" stroke="#5a5a5a" stroke-width="0.8"/><path d="M827.6 427 A2.6 2.9 0 1 0 827.6 432.2" fill="none" stroke="#1a6aa0" stroke-width="1.2"/><path d="M826.5 429.6 H829.6 M828 428.2 V431" stroke="#1a6aa0" stroke-width="1"/>
<text x="834.3" y="433" font-size="11" fill="#111" stroke="#111" stroke-width="0.28" textLength="65.5" lengthAdjust="spacingAndGlyphs">RayCastTest</text>
<circle cx="977.4" cy="428.5" r="3.4" fill="none" stroke="#222" stroke-width="0.9"/><circle cx="977.4" cy="428.5" r="1" fill="#222"/>
<text x="700.4" y="450.5" font-size="11" fill="#111" stroke="#111" stroke-width="0.28" textLength="20" lengthAdjust="spacingAndGlyphs">Wall</text>
<rect x="818" y="439" width="148" height="16" fill="#a8a8a8"/>
<line x1="818.5" y1="439" x2="818.5" y2="455" stroke="#767676"/><line x1="965.5" y1="439" x2="965.5" y2="455" stroke="#767676"/>
<line x1="818" y1="439.5" x2="966" y2="439.5" stroke="#555555"/>
<line x1="818" y1="454.5" x2="966" y2="454.5" stroke="#7a7a7a"/>
<line x1="819" y1="453.5" x2="965" y2="453.5" stroke="#bcbcbc"/>
<line x1="827" y1="447.8" x2="827" y2="442.6" stroke="#6ab82a" stroke-width="1.6"/>
<line x1="827" y1="447.8" x2="831.7" y2="450.8" stroke="#d02818" stroke-width="1.6"/>
<line x1="827" y1="447.8" x2="822.3" y2="450.8" stroke="#2a90d0" stroke-width="1.6"/>
<text x="834.3" y="450.5" font-size="11" fill="#111" stroke="#111" stroke-width="0.28" textLength="95.1" lengthAdjust="spacingAndGlyphs">Cube (Transform)</text>
<circle cx="977.4" cy="446.5" r="3.4" fill="none" stroke="#222" stroke-width="0.9"/><circle cx="977.4" cy="446.5" r="1" fill="#222"/>
<line x1="685" y1="462.5" x2="988" y2="462.5" stroke="#a2a2a2"/>
<line x1="685" y1="463.5" x2="988" y2="463.5" stroke="#484848"/>
<line x1="685" y1="464.5" x2="988" y2="464.5" stroke="#bcbcbc"/>
<rect x="685" y="464" width="303" height="43" fill="#b0b0b0"/>
<circle cx="705.9" cy="484.8" r="14.5" fill="url(#sph)"/>
<text x="730.3" y="480.5" font-size="12" fill="#1a1a1a" stroke="#1a1a1a" stroke-width="0.28" textLength="87" lengthAdjust="spacingAndGlyphs">Default-Diffuse</text>
<text x="730.3" y="499.8" font-size="11" fill="#666" stroke="#666" stroke-width="0.28" textLength="35.7" lengthAdjust="spacingAndGlyphs">Shader</text>
<rect x="778.5" y="488.5" width="161" height="14" rx="3" fill="url(#shd)" stroke="#858585"/>
<text x="784.5" y="499" font-size="10" fill="#6a6a6a" stroke="#6a6a6a" stroke-width="0.28" textLength="30.8" lengthAdjust="spacingAndGlyphs">Diffuse</text>
<path d="M929.5 494.5 L933.5 494.5 L931.5 497.5 Z" fill="#6a6a6a"/>
<rect x="944.5" y="488.5" width="37" height="14" rx="3" fill="url(#shd)" stroke="#858585"/>
<text x="947.5" y="499" font-size="10" fill="#6a6a6a" stroke="#6a6a6a" stroke-width="0.28" textLength="30" lengthAdjust="spacingAndGlyphs">Edit...</text>
<path d="M952.5 470.5 L955 469.5 H963.5 V481.5 L961 482.5 H952.5 Z" fill="#1a2c4c"/>
<rect x="954.5" y="470.5" width="8.5" height="11.5" fill="url(#book)"/>
<line x1="953.3" y1="471" x2="953.3" y2="481.5" stroke="#98b4dc" stroke-width="1"/>
<line x1="963.3" y1="470.5" x2="963.3" y2="481.5" stroke="#c8d4e4" stroke-width="0.7"/>
<text x="956.3" y="479.2" font-size="8" fill="#c8d4e4">?</text>
<circle cx="974" cy="474.8" r="2.9" fill="none" stroke="#707070" stroke-width="1.9"/>
<rect x="972.9" y="469.8" width="2.2" height="2.6" fill="#707070" transform="rotate(0 974 474.8)"/>
<rect x="972.9" y="469.8" width="2.2" height="2.6" fill="#707070" transform="rotate(45 974 474.8)"/>
<rect x="972.9" y="469.8" width="2.2" height="2.6" fill="#707070" transform="rotate(90 974 474.8)"/>
<rect x="972.9" y="469.8" width="2.2" height="2.6" fill="#707070" transform="rotate(135 974 474.8)"/>
<rect x="972.9" y="469.8" width="2.2" height="2.6" fill="#707070" transform="rotate(180 974 474.8)"/>
<rect x="972.9" y="469.8" width="2.2" height="2.6" fill="#707070" transform="rotate(225 974 474.8)"/>
<rect x="972.9" y="469.8" width="2.2" height="2.6" fill="#707070" transform="rotate(270 974 474.8)"/>
<rect x="972.9" y="469.8" width="2.2" height="2.6" fill="#707070" transform="rotate(315 974 474.8)"/>
<path d="M979.3 477.8 L982.3 477.8 L980.8 480.6 Z" fill="#707070"/>
<line x1="685" y1="507.5" x2="988" y2="507.5" stroke="#5a5a5a"/>
<text x="700.4" y="525.7" font-size="11" fill="#5a5a5a" stroke="#5a5a5a" stroke-width="0.28" textLength="56.8" lengthAdjust="spacingAndGlyphs">Main Color</text>
<rect x="920.5" y="514.5" width="45" height="15" fill="#fff" stroke="#707070"/>
<rect x="943" y="526" width="22" height="3" fill="#000"/>
<path d="M971 527.5 L979.5 519 M977 516.5 L982 521.5 M979 514.5 a2 2 0 0 1 3 3" stroke="#333" stroke-width="1.2" fill="none"/>
<path d="M970 528.5 L971 524.5 L978 517.5 L980.5 520 L973.5 527 Z" fill="#d0d0d0" stroke="#444" stroke-width="0.7"/>
<text x="700.4" y="544" font-size="11" fill="#5a5a5a" stroke="#5a5a5a" stroke-width="0.28" textLength="55" lengthAdjust="spacingAndGlyphs">Base (RGB)</text>
<rect x="920.5" y="532.5" width="63" height="63" fill="#8c8c8c" stroke="#737373"/>
<text x="941.6" y="543" font-size="10" fill="#4a4a4a" stroke="#4a4a4a" stroke-width="0.28" textLength="23" lengthAdjust="spacingAndGlyphs">None</text>
<text x="932.7" y="554" font-size="10" fill="#4a4a4a" stroke="#4a4a4a" stroke-width="0.28" textLength="41.3" lengthAdjust="spacingAndGlyphs">(Texture)</text>
<path d="M951.5 595.5 V586 a2 2 0 0 1 2 -2 H983.5 V595.5" fill="#a8a8a8" stroke="#7a7a7a"/>
<text x="956" y="594" font-size="10" fill="#5a5a5a" stroke="#5a5a5a" stroke-width="0.28" textLength="25.8" lengthAdjust="spacingAndGlyphs">Select</text>
<text x="727.3" y="563.2" font-size="10" fill="#6a6a6a" stroke="#6a6a6a" stroke-width="0.28" textLength="25.8" lengthAdjust="spacingAndGlyphs">Tiling</text>
<text x="825" y="563.2" font-size="10" fill="#6a6a6a" stroke="#6a6a6a" stroke-width="0.28" textLength="27" lengthAdjust="spacingAndGlyphs">Offset</text>
<text x="715" y="579" font-size="10" fill="#6a6a6a" stroke="#6a6a6a" stroke-width="0.28">x</text>
<text x="715" y="595" font-size="10" fill="#6a6a6a" stroke="#6a6a6a" stroke-width="0.28">y</text>
<rect x="725" y="567" width="96" height="13" fill="#a4a4a4"/>
<line x1="725.5" y1="567" x2="725.5" y2="580" stroke="#8a8a8a"/><line x1="820.5" y1="567" x2="820.5" y2="580" stroke="#8a8a8a"/>
<line x1="725" y1="567.5" x2="821" y2="567.5" stroke="#7c7c7c"/>
<line x1="725" y1="579.5" x2="821" y2="579.5" stroke="#8a8a8a"/>
<line x1="726" y1="578.5" x2="820" y2="578.5" stroke="#b2b2b2"/>
<rect x="823" y="567" width="95" height="13" fill="#a4a4a4"/>
<line x1="823.5" y1="567" x2="823.5" y2="580" stroke="#8a8a8a"/><line x1="917.5" y1="567" x2="917.5" y2="580" stroke="#8a8a8a"/>
<line x1="823" y1="567.5" x2="918" y2="567.5" stroke="#7c7c7c"/>
<line x1="823" y1="579.5" x2="918" y2="579.5" stroke="#8a8a8a"/>
<line x1="824" y1="578.5" x2="917" y2="578.5" stroke="#b2b2b2"/>
<rect x="725" y="583" width="96" height="13" fill="#a4a4a4"/>
<line x1="725.5" y1="583" x2="725.5" y2="596" stroke="#8a8a8a"/><line x1="820.5" y1="583" x2="820.5" y2="596" stroke="#8a8a8a"/>
<line x1="725" y1="583.5" x2="821" y2="583.5" stroke="#7c7c7c"/>
<line x1="725" y1="595.5" x2="821" y2="595.5" stroke="#8a8a8a"/>
<line x1="726" y1="594.5" x2="820" y2="594.5" stroke="#b2b2b2"/>
<rect x="823" y="583" width="95" height="13" fill="#a4a4a4"/>
<line x1="823.5" y1="583" x2="823.5" y2="596" stroke="#8a8a8a"/><line x1="917.5" y1="583" x2="917.5" y2="596" stroke="#8a8a8a"/>
<line x1="823" y1="583.5" x2="918" y2="583.5" stroke="#7c7c7c"/>
<line x1="823" y1="595.5" x2="918" y2="595.5" stroke="#8a8a8a"/>
<line x1="824" y1="594.5" x2="917" y2="594.5" stroke="#b2b2b2"/>
<text x="727.5" y="578" font-size="10" fill="#7a7a7a" stroke="#7a7a7a" stroke-width="0.28">1</text>
<text x="825.5" y="578" font-size="10" fill="#7a7a7a" stroke="#7a7a7a" stroke-width="0.28">0</text>
<text x="727.5" y="594" font-size="10" fill="#7a7a7a" stroke="#7a7a7a" stroke-width="0.28">1</text>
<text x="825.5" y="594" font-size="10" fill="#7a7a7a" stroke="#7a7a7a" stroke-width="0.28">0</text>
<line x1="685" y1="607.5" x2="988" y2="607.5" stroke="#a2a2a2"/>
<line x1="685" y1="608.5" x2="988" y2="608.5" stroke="#5a5a5a"/>
<rect x="721.5" y="619.5" width="229" height="21" rx="3" fill="url(#ac)" stroke="#4a4a4a"/>
<text x="789.1" y="634" font-size="12" fill="#1a1a1a" stroke="#1a1a1a" stroke-width="0.28" textLength="94.1" lengthAdjust="spacingAndGlyphs">Add Component</text>
</svg></body></html>
